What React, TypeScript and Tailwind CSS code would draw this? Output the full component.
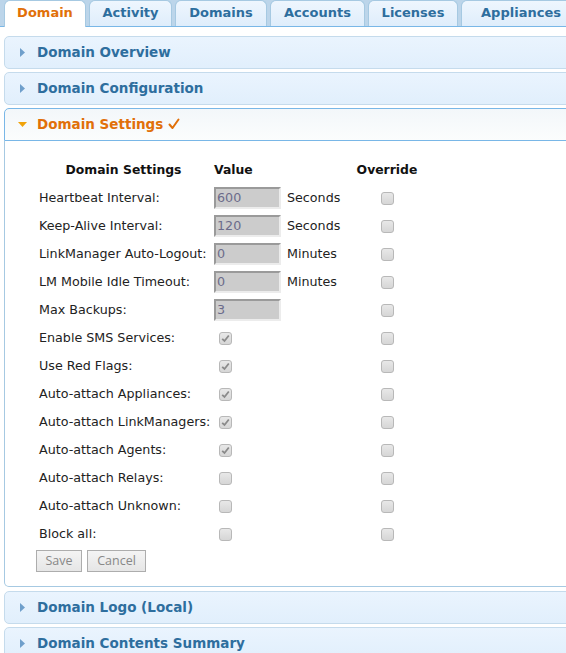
import React from "react";

const tabs = [
  { label: "Domain", w: "w-[82px]", active: true },
  { label: "Activity", w: "w-[83px]" },
  { label: "Domains", w: "w-[92px]" },
  { label: "Accounts", w: "w-[95px]" },
  { label: "Licenses", w: "w-[90px]" },
  { label: "Appliances", w: "w-[120px]" },
];

type Row = {
  label: string;
  input?: string;
  unit?: string;
  check?: boolean;
};

const rows: Row[] = [
  { label: "Heartbeat Interval:", input: "600", unit: "Seconds" },
  { label: "Keep-Alive Interval:", input: "120", unit: "Seconds" },
  { label: "LinkManager Auto-Logout:", input: "0", unit: "Minutes" },
  { label: "LM Mobile Idle Timeout:", input: "0", unit: "Minutes" },
  { label: "Max Backups:", input: "3" },
  { label: "Enable SMS Services:", check: true },
  { label: "Use Red Flags:", check: true },
  { label: "Auto-attach Appliances:", check: true },
  { label: "Auto-attach LinkManagers:", check: true },
  { label: "Auto-attach Agents:", check: true },
  { label: "Auto-attach Relays:", check: false },
  { label: "Auto-attach Unknown:", check: false },
  { label: "Block all:", check: false },
];

const Box = ({ checked }: { checked?: boolean }) => (
  <span className="inline-flex items-center justify-center w-[13px] h-[13px] rounded-[3px] border border-[#b8b8b8] bg-gradient-to-b from-[#e8e8e8] to-[#d6d6d6]">
    {checked && (
      <svg width="9" height="9" viewBox="0 0 9 9">
        <path d="M1.2 4.8 L3.5 7 L7.8 1.5" fill="none" stroke="#8a8a8a" strokeWidth="1.8" />
      </svg>
    )}
  </span>
);

const Arrow = () => (
  <svg width="5" height="9" viewBox="0 0 5 9" className="mr-[12px]">
    <path d="M0 0 L5 4.5 L0 9 Z" fill="#6f9fcb" />
  </svg>
);

const Header = ({ title }: { title: string }) => (
  <div className="flex items-center h-[33px] pl-[15px] rounded-[5px] border border-[#c5dbec] bg-gradient-to-b from-[#eaf4fe] to-[#e1effc] text-[#2e6e9e] font-bold text-[13.5px]">
    <Arrow />
    {title}
  </div>
);

export default function App() {
  return (
    <div className="w-[566px] h-[653px] overflow-hidden bg-white" style={{ fontFamily: '"DejaVu Sans", Verdana, sans-serif' }}>
      <div className="w-[620px]">
        {/* tab bar */}
        <div className="flex gap-[3px] bg-[#bcd5ea] pl-[4px] border-b border-[#79b7e7] h-[27px]">
          {tabs.map((t) => (
            <div
              key={t.label}
              className={
                t.active
                  ? `${t.w} h-[27px] -mb-px flex items-center justify-center pb-[2px] rounded-t-[6px] border border-b-0 border-[#a6c9e2] bg-white text-[#e17009] font-bold text-[13px]`
                  : `${t.w} h-[26px] flex items-center justify-center pb-[2px] rounded-t-[6px] border border-b-0 border-[#a6c9e2] bg-gradient-to-b from-[#eef6fe] to-[#dfedfb] text-[#2e6e9e] font-bold text-[13px]`
              }
            >
              {t.label}
            </div>
          ))}
        </div>

        {/* accordion */}
        <div className="ml-[4px] mt-[9px] flex flex-col">
          <Header title="Domain Overview" />
          <div className="h-[3px]" />
          <Header title="Domain Configuration" />
          <div className="h-[3px]" />
          <div className="flex items-center h-[33px] pl-[13px] rounded-t-[5px] border border-[#79b7e7] bg-gradient-to-b from-[#f3f7fa] to-[#fbfdfd] text-[#e17009] font-bold text-[13.5px]">
            <svg width="9" height="5" viewBox="0 0 9 5" className="mr-[10px]">
              <path d="M0 0 L9 0 L4.5 5 Z" fill="#f0a30a" />
            </svg>
            Domain Settings
            <svg width="12" height="12" viewBox="0 0 12 12" className="ml-[5px] mb-[1px]">
              <path d="M1.5 6.5 L4.5 10 L10.5 1.5" fill="none" stroke="#e17009" strokeWidth="2" strokeLinecap="round" strokeLinejoin="round" />
            </svg>
          </div>
          <div className="border border-t-0 border-[#a6c9e2] rounded-b-[5px] bg-white pl-[31px] pt-[15px] pb-[14px] text-[12.7px] text-[#222]">
            <div className="grid grid-cols-[175px_144px_64px] h-[28px] items-center font-bold text-[12.4px] text-[#111]">
              <div className="text-center">Domain Settings</div>
              <div className="pl-[3px]">Value</div>
              <div className="text-center">Override</div>
            </div>
            {rows.map((r) => (
              <div key={r.label} className="grid grid-cols-[175px_144px_64px] h-[28px] items-center">
                <div className="pl-[3px] whitespace-nowrap">{r.label}</div>
                <div className="pl-[3px] flex items-center">
                  {r.input !== undefined ? (
                    <>
                      <div className="w-[67px] h-[22px] flex items-center pl-[1px] bg-[#cccccc] border-2 border-t-[#9a9a9a] border-l-[#9a9a9a] border-b-[#ececec] border-r-[#ececec] text-[#6b6b8a]">
                        {r.input}
                      </div>
                      {r.unit && <span className="ml-[6px]">{r.unit}</span>}
                    </>
                  ) : (
                    <span className="ml-[5px] flex">
                      <Box checked={r.check} />
                    </span>
                  )}
                </div>
                <div className="flex justify-center pl-[1px]">
                  <Box />
                </div>
              </div>
            ))}
            <div className="flex gap-[5px] mt-[2px]" style={{ fontFamily: '"Open Sans", "Liberation Sans", sans-serif' }}>
              <button className="w-[46px] h-[22px] border border-[#adadad] bg-gradient-to-b from-[#f4f4f4] to-[#e6e6e6] text-[#888] text-[12.5px]">
                Save
              </button>
              <button className="w-[59px] h-[22px] border border-[#adadad] bg-gradient-to-b from-[#f4f4f4] to-[#e6e6e6] text-[#888] text-[12.5px]">
                Cancel
              </button>
            </div>
          </div>
          <div className="h-[4px]" />
          <Header title="Domain Logo (Local)" />
          <div className="h-[3px]" />
          <Header title="Domain Contents Summary" />
        </div>
      </div>
    </div>
  );
}
